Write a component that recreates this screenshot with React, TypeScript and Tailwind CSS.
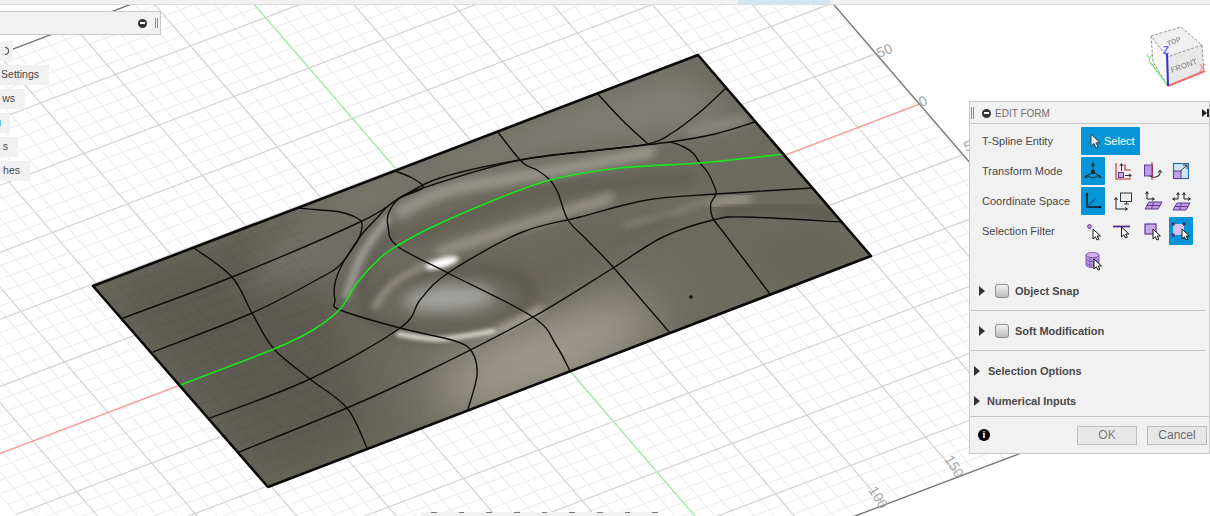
import type { ReactNode } from 'react'

type Pt = [number, number]

// viewport projection, measured off the grid labels
const proj = (x: number, y: number): Pt => [483 + 1.5 * x - 0.87 * y, 270 - 0.57 * x - 1.01 * y]

const X_MIN = -340
const X_MAX = 291
const Y_MIN = -289
const Y_MAX = 298

const spline = (pts: Pt[]) => {
    let d = `M${pts[0][0]} ${pts[0][1]}`
    for (let i = 0; i < pts.length - 1; i++) {
        const p0 = pts[i - 1] ?? pts[i]
        const p1 = pts[i]
        const p2 = pts[i + 1]
        const p3 = pts[i + 2] ?? p2
        const c1 = [p1[0] + (p2[0] - p0[0]) / 6, p1[1] + (p2[1] - p0[1]) / 6]
        const c2 = [p2[0] - (p3[0] - p1[0]) / 6, p2[1] - (p3[1] - p1[1]) / 6]
        d += ` C${c1[0]} ${c1[1]} ${c2[0]} ${c2[1]} ${p2[0]} ${p2[1]}`
    }
    return d
}

const range = (from: number, to: number, step: number) => {
    const out: number[] = []
    for (let v = from; v <= to; v += step) out.push(v)
    return out
}

const PLATE = '93,286 698,55 871,256 268,487'

const meshLines: Pt[][] = [
    [[123, 318], [232, 277], [360, 222], [400, 198], [440, 178], [520, 160], [600, 150], [648, 144], [672, 133], [700, 112], [726, 88]],
    [[153, 352], [252, 313], [320, 278], [340, 265], [353, 247], [363, 233], [377, 218], [392, 203], [420, 189], [520, 160], [600, 150], [670, 142], [715, 134], [755, 122]],
    [[210, 418], [310, 379], [400, 328], [420, 300], [448, 273], [520, 233], [580, 217], [647, 200], [716, 194], [813, 188]],
    [[239, 452], [347, 408], [430, 370], [533, 317], [613, 268], [663, 237], [713, 220], [747, 217], [842, 222]],
    [[194, 248], [232, 277], [252, 313], [274, 349], [310, 379], [347, 408], [367, 448]],
    [[297, 208], [320, 210], [340, 212], [357, 218], [362, 225], [358, 240], [343, 263], [335, 283], [335, 300], [340, 310], [400, 328], [455, 341], [472, 352], [477, 375], [468, 409]],
    [[395, 171], [412, 178], [423, 188], [400, 198], [389, 212], [388, 226], [397, 246], [448, 273], [533, 317], [556, 345], [570, 371]],
    [[497, 131], [522, 162], [537, 170], [550, 180], [558, 193], [568, 220], [587, 240], [613, 267], [670, 333]],
    [[597, 93], [622, 120], [648, 144]],
    [[670, 142], [682, 146], [693, 153], [700, 163], [708, 173], [715, 188], [716, 194], [711, 203], [711, 212], [714, 220], [727, 237], [770, 294]],
]

const greenLine: Pt[] = [
    [180, 385], [274, 349], [313, 330], [340, 309], [357, 283], [380, 258], [397, 246], [430, 228], [487, 203], [550, 180], [620, 168], [700, 163], [785, 154],
]

// soft strokes for the surface shading: colour, width, blur id, points, opacity
const shadeStrokes: [string, number, string, Pt[], number][] = [
    ['#a9a89f', 11, 'blur5', [[400, 212], [450, 190], [550, 172], [650, 152]], 0.8],
    ['#5f5b50', 13, 'blur5', [[405, 240], [480, 212], [560, 190], [690, 178]], 0.7],
    ['#a6a196', 9, 'blur5', [[440, 252], [520, 226], [610, 198]], 0.9],
    ['#b9bcb9', 5, 'blur3', [[346, 296], [362, 255], [388, 218]], 0.9],
    ['#57534a', 6, 'blur3', [[360, 292], [378, 255], [396, 232]], 0.6],
    ['#a8a39a', 6, 'blur3', [[375, 306], [395, 282], [432, 262]], 0.8],
    ['#f6f4ef', 4, 'blur2', [[398, 334], [440, 339], [494, 331]], 1],
    ['#b5b0a5', 8, 'blur3', [[500, 330], [540, 310]], 0.7],
    ['#b2ad9f', 9, 'blur5', [[712, 204], [748, 198]], 0.75],
    ['#a8a89f', 4, 'blur3', [[625, 226], [670, 214], [705, 201]], 0.5],
    ['#a7a7a0', 7, 'blur5', [[690, 133], [745, 119]], 0.6],
    ['#5c584e', 12, 'blur5', [[725, 212], [780, 208], [835, 215]], 0.8],
    ['#5f5c52', 8, 'blur5', [[620, 240], [670, 218]], 0.5],
]

const gridLines = (major: boolean) => (
    <>
        {range(-340, X_MAX, 10)
            .filter((x) => (x % 50 === 0) === major)
            .map((x) => {
                const a = proj(x, Y_MIN)
                const b = proj(x, Y_MAX)
                return <line key={`x${x}`} x1={a[0]} y1={a[1]} x2={b[0]} y2={b[1]} />
            })}
        {range(-280, Y_MAX, 10)
            .filter((y) => (y % 50 === 0) === major)
            .map((y) => {
                const a = proj(X_MIN, y)
                const b = proj(X_MAX, y)
                return <line key={`y${y}`} x1={a[0]} y1={a[1]} x2={b[0]} y2={b[1]} />
            })}
    </>
)

function Grid() {
    const redA = proj(X_MIN, 0)
    const redB = proj(X_MAX, 0)
    const grnA = proj(0, Y_MIN)
    const grnB = proj(0, Y_MAX)
    const corner1 = proj(X_MAX, Y_MAX)
    const corner2 = proj(X_MAX, Y_MIN)
    const corner3 = proj(X_MIN, Y_MIN)
    const corner4 = proj(X_MIN, Y_MAX)
    return (
        <>
            <g stroke="#efefef" strokeWidth="1.2">{gridLines(false)}</g>
            <g stroke="#d2d2d2" strokeWidth="1.2">{gridLines(true)}</g>
            <line x1={redA[0]} y1={redA[1]} x2={redB[0]} y2={redB[1]} stroke="#ff9d9d" strokeWidth="1.3" />
            <line x1={grnA[0]} y1={grnA[1]} x2={grnB[0]} y2={grnB[1]} stroke="#a8eda8" strokeWidth="1.3" />
            <polyline
                points={`${corner4[0]},${corner4[1]} ${corner1[0]},${corner1[1]} ${corner2[0]},${corner2[1]} ${corner3[0]},${corner3[1]}`}
                fill="none"
                stroke="#777"
                strokeWidth="1.4"
            />
            <g fontFamily="'Liberation Sans', sans-serif" fontSize="14" fill="#a6a6a6">
                <text transform="translate(879 58) rotate(-22)">50</text>
                <text transform="translate(921 107) rotate(-22)">0</text>
                <text transform="translate(966 152) rotate(-22)">50</text>
                <text transform="translate(868 490) rotate(58)">100</text>
                <text transform="translate(944 459) rotate(58)">150</text>
            </g>
        </>
    )
}

function Surface() {
    return (
        <>
            <defs>
                <clipPath id="plate">
                    <polygon points={PLATE} />
                </clipPath>
                <clipPath id="plateLeft">
                    <polygon points="93,286 300,210 350,420 268,487" />
                </clipPath>
                <filter id="blur2" x="-50%" y="-50%" width="200%" height="200%"><feGaussianBlur stdDeviation="2" /></filter>
                <filter id="blur3" x="-50%" y="-50%" width="200%" height="200%"><feGaussianBlur stdDeviation="3" /></filter>
                <filter id="blur5" x="-50%" y="-50%" width="200%" height="200%"><feGaussianBlur stdDeviation="5" /></filter>
                <filter id="blur7" x="-50%" y="-50%" width="200%" height="200%"><feGaussianBlur stdDeviation="7" /></filter>
                <filter id="blur15" x="-50%" y="-50%" width="200%" height="200%"><feGaussianBlur stdDeviation="15" /></filter>
                <filter id="blur25" x="-50%" y="-50%" width="200%" height="200%"><feGaussianBlur stdDeviation="25" /></filter>
            </defs>
            <polygon points={PLATE} fill="#6d6a60" />
            <g clipPath="url(#plate)">
                <polygon points="93,286 268,487 380,440 340,300 280,220" fill="#5d5a51" filter="url(#blur25)" />
                <ellipse cx="545" cy="355" rx="120" ry="36" transform="rotate(-22 545 355)" fill="#a39d90" filter="url(#blur25)" />
                <polygon points="300,212 600,95 680,70 745,125 560,150 420,182 350,215" fill="#7f7e76" filter="url(#blur15)" />
                <polygon points="280,235 350,225 335,270 240,295" fill="#73726a" filter="url(#blur15)" />
                <polygon points="440,290 590,225 640,240 540,310" fill="#6a665b" filter="url(#blur15)" />
                <polygon points="750,250 830,235 860,258 790,280" fill="#65625a" filter="url(#blur15)" />
                <ellipse cx="448" cy="300" rx="84" ry="30" transform="rotate(-6 448 300)" fill="none" stroke="#56524a" strokeWidth="10" opacity="0.8" filter="url(#blur7)" />
                <ellipse cx="450" cy="298" rx="46" ry="13" transform="rotate(-4 450 298)" fill="#a3a3a0" filter="url(#blur7)" />
                {shadeStrokes.map(([color, width, blur, pts, opacity], i) => (
                    <path key={i} d={spline(pts)} fill="none" stroke={color} strokeWidth={width} strokeLinecap="round" opacity={opacity} filter={`url(#${blur})`} />
                ))}
                <ellipse cx="442" cy="263" rx="17" ry="5" transform="rotate(-16 442 263)" fill="#ffffff" filter="url(#blur2)" />
            </g>
            <g clipPath="url(#plateLeft)" stroke="#000" strokeWidth="1" opacity="0.05">
                {gridLines(false)}
                {gridLines(true)}
            </g>
            <g fill="none" stroke="#0d0d0d" strokeWidth="1.4">
                {meshLines.map((pts, i) => (
                    <path key={i} d={spline(pts)} />
                ))}
            </g>
            <path d={spline(greenLine)} fill="none" stroke="#19e619" strokeWidth="1.6" />
            <circle cx="691" cy="297" r="1.8" fill="#111" />
            <polygon points={PLATE} fill="none" stroke="#0a0a0a" strokeWidth="2.6" strokeLinejoin="round" />
        </>
    )
}

function NavCube() {
    return (
        <svg className="absolute left-[1130px] top-[15px] h-[85px] w-[80px]" viewBox="1130 15 80 85">
            <g filter="url(#cubeblur)">
                <polygon points="1151,36 1181,27 1202,45 1204,71 1168,86 1153,62" fill="#f7f7f7" />
                <polygon points="1151,36 1181,27 1202,45 1167,57" fill="#f0f0f0" />
                <polygon points="1167,57 1202,45 1204,71 1168,86" fill="#e8e8e8" />
                <g fill="none" stroke="#8a8a8a" strokeWidth="0.9" strokeDasharray="3 1.5">
                    <polygon points="1151,36 1181,27 1202,45 1167,57" />
                    <path d="M1202,45 L1204,71 M1151,36 L1153,62 L1168,86" />
                </g>
                <g fontFamily="'Liberation Sans', sans-serif" fontWeight="700" fill="#9a9a9a">
                    <text fontSize="7" transform="translate(1168 46) rotate(-20)">TOP</text>
                    <text fontSize="8" transform="translate(1172 73) rotate(-20)">FRONT</text>
                </g>
                <line x1="1168" y1="86" x2="1205" y2="71" stroke="#e8706a" strokeWidth="2" />
                <line x1="1168" y1="86" x2="1150" y2="62" stroke="#8fe08f" strokeWidth="1.6" />
                <line x1="1168" y1="86" x2="1167" y2="53" stroke="#3030d0" strokeWidth="2" />
                <g fontFamily="'Liberation Sans', sans-serif" fontSize="10">
                    <text x="1163" y="54" fill="#6a6ae8" fontWeight="700">Z</text>
                    <text x="1199" y="72" fill="#f08078">X</text>
                    <text x="1146" y="62" fill="#7fdc7f">Y</text>
                </g>
            </g>
            <defs>
                <filter id="cubeblur"><feGaussianBlur stdDeviation="0.35" /></filter>
            </defs>
        </svg>
    )
}

function Cursor({ x, y }: { x: number; y: number }) {
    return (
        <path
            transform={`translate(${x} ${y})`}
            d="M0 0 L0 10 L2.4 7.8 L4 11 L5.8 10.2 L4.2 7 L7.4 7 Z"
            fill="#fff"
            stroke="#000"
            strokeWidth="0.9"
            strokeLinejoin="round"
        />
    )
}

function Icon({ children }: { children: ReactNode }) {
    return (
        <svg className="h-6 w-6" viewBox="0 0 24 24">
            {children}
        </svg>
    )
}

const iconTriad = (
    <Icon>
        <g stroke="#1c2b36" strokeWidth="1" fill="none">
            <path d="M12 4 V13 M12 13 L4 18 M12 13 L20 18" />
            <path d="M6 16 A8 8 0 0 0 18 16" />
        </g>
        <circle cx="12" cy="13" r="2.2" fill="#1c2b36" />
        <path d="M12 3 L10 7 H14 Z M3 19 L7 18.6 L5.4 15.8 Z M21 19 L17 18.6 L18.6 15.8 Z" fill="#1c2b36" />
    </Icon>
)

const iconTranslate = (
    <Icon>
        <path d="M5 4 V20 H20 M14 5 V11 H20" fill="none" stroke="#c8262c" strokeWidth="1.1" />
        <path d="M10.5 12 V5 M8.8 7 L10.5 4.6 L12.2 7 M14 16.5 H20 M18 14.8 L20.4 16.5 L18 18.2" fill="none" stroke="#333" strokeWidth="1" />
        <rect x="7.5" y="13.5" width="5" height="5" fill="#c9a9e8" stroke="#5f3a96" strokeWidth="1" />
    </Icon>
)

const iconRotate = (
    <Icon>
        <rect x="3.5" y="6" width="8" height="11" fill="#bd9ae4" stroke="#5f3a96" strokeWidth="1" />
        <path d="M11 3 V21" stroke="#c8262c" strokeWidth="1" />
        <path d="M9 17 C14 20 20 17 19 12" fill="none" stroke="#333" strokeWidth="1.1" />
        <path d="M16.8 13.8 L19 11 L21 13.8" fill="none" stroke="#333" strokeWidth="1" />
    </Icon>
)

const iconScale = (
    <Icon>
        <rect x="4.5" y="4.5" width="15" height="15" fill="#cfe4f2" stroke="#1f6fb0" strokeWidth="1.1" />
        <rect x="4.5" y="12" width="7.5" height="7.5" fill="#c39fe8" stroke="#5f3a96" strokeWidth="1" />
        <path d="M11 12.5 L18 6 M14 6 H18 V10" fill="none" stroke="#333" strokeWidth="1" />
    </Icon>
)

const iconWorld = (
    <Icon>
        <path d="M6 4 V18 H20" fill="none" stroke="#111" strokeWidth="1.3" />
        <path d="M6 18 L15 9" stroke="#0b5f90" strokeWidth="1.2" />
        <path d="M4.5 6.5 L6 3.5 L7.5 6.5 Z M18 16.5 L21 18 L18 19.5 Z" fill="#111" />
    </Icon>
)

const iconScreen = (
    <Icon>
        <path d="M5 9 V20 H16 M3.5 11 L5 8.5 L6.5 11 M14 18.5 L16.5 20 L14 21.5" fill="none" stroke="#222" strokeWidth="1" />
        <rect x="9.5" y="4" width="11" height="8.5" fill="#eee" stroke="#333" strokeWidth="1" />
        <path d="M13 15 H18 M15.5 12.5 V15" stroke="#333" strokeWidth="1" />
    </Icon>
)

const iconPlane = (
    <Icon>
        <path d="M8 13 L4 20 H17 L21 13 Z M6 16.5 H19 M12.5 13 L10.5 20" fill="#bd9ae4" stroke="#5f3a96" strokeWidth="1" />
        <path d="M6 3 V10 H13 M4.6 5 L6 2.6 L7.4 5 M11 8.6 L13.4 10 L11 11.4" fill="none" stroke="#222" strokeWidth="1" />
    </Icon>
)

const iconPlanes = (
    <Icon>
        <path d="M8 14 L4 21 H17 L21 14 Z M6 17.5 H19 M12.5 14 L10.5 21" fill="#bd9ae4" stroke="#5f3a96" strokeWidth="1" />
        <path d="M9 4 V10 H4 M15 4 V10 H21 M7.6 6 L9 3.6 L10.4 6 M13.6 6 L15 3.6 L16.4 6 M6 8.6 L3.6 10 L6 11.4 M19 8.6 L21.4 10 L19 11.4" fill="none" stroke="#222" strokeWidth="1" />
    </Icon>
)

const iconVertex = (
    <Icon>
        <circle cx="8.5" cy="7.5" r="1.9" fill="#bd9ae4" stroke="#5f3a96" strokeWidth="1" />
        <Cursor x={12} y={10} />
    </Icon>
)

const iconEdge = (
    <Icon>
        <path d="M2 7.5 H19" stroke="#5a2d8c" strokeWidth="1.8" />
        <Cursor x={10.5} y={8} />
    </Icon>
)

const iconFace = (
    <Icon>
        <rect x="4" y="5" width="11" height="10" fill="#c7a8ea" stroke="#5f3a96" strokeWidth="1.2" />
        <Cursor x={12} y={10} />
    </Icon>
)

const iconBody = (
    <Icon>
        <rect x="4" y="5" width="11" height="11" fill="#d7c2ef" />
        <path d="M2.6 3.6 h3 v3 h-3 Z M13.6 3.6 h3 v3 h-3 Z M2.6 14.6 h3 v3 h-3 Z M13.6 14.6 h3 v3 h-3 Z" fill="#4a2a78" />
        <Cursor x={13} y={10} />
    </Icon>
)

const iconSolid = (
    <Icon>
        <path d="M5 6 V16 A6.5 2.6 0 0 0 18 16 V6 Z" fill="#b48fdf" stroke="#6a49a0" strokeWidth="0.8" />
        <ellipse cx="11.5" cy="6" rx="6.5" ry="2.6" fill="#cdb2ee" stroke="#6a49a0" strokeWidth="0.8" />
        <path d="M5 10 A6.5 2.6 0 0 0 18 10 M5 13.5 A6.5 2.6 0 0 0 18 13.5 M9 8 V18 M13 8 V18" fill="none" stroke="#6a49a0" strokeWidth="0.6" />
        <Cursor x={13} y={10} />
    </Icon>
)

function IconCell({ active, tight, children }: { active?: boolean; tight?: boolean; children: ReactNode }) {
    return (
        <div className={`flex h-7 w-6 items-center justify-center ${active ? 'rounded-[1px] bg-[#0696d7]' : ''} ${tight ? '-ml-0.5' : ''}`}>
            {children}
        </div>
    )
}

function FormRow({ label, short, children }: { label?: string; short?: boolean; children: ReactNode }) {
    return (
        <div className={`flex pl-3 ${short ? 'h-[25px] items-start pt-px' : 'h-[30px] items-center'}`}>
            <div className="w-[99px] text-[#46484a]">{label}</div>
            <div className="flex gap-1.5">{children}</div>
        </div>
    )
}

function Caret() {
    return <div className="h-0 w-0 shrink-0 border-y-[5px] border-l-[6px] border-y-transparent border-l-[#333]" />
}

function SnapRow({ label }: { label: string }) {
    return (
        <div className="ml-px mr-1 flex h-10 items-center border-b border-[#c6c6c6] pl-[8px] pt-px font-bold text-[#48484c]">
            <Caret />
            <div className="ml-[10px] mr-[6px] h-[14px] w-[14px] rounded-[3px] border border-[#8d8d8d] bg-gradient-to-b from-[#f2f2f2] to-[#bdbdbd]" />
            <span>{label}</span>
        </div>
    )
}

function EditForm() {
    return (
        <div className="absolute left-[969px] top-[101px] flex h-[353px] w-[241px] flex-col border border-[#c9c9c9] bg-[#f1f1f1] text-[11px]">
            <div className="flex h-[22px] shrink-0 items-center border-b border-[#c9c9c9] pl-px pt-px text-[#6e6e6e]">
                <div className="mr-[8px] h-3 w-[3px] border-x border-[#8c8c8c]" />
                <div className="mr-[4px] flex h-[9px] w-[9px] items-center justify-center rounded-full bg-[#333]">
                    <div className="h-[1.5px] w-[5px] bg-white" />
                </div>
                <span className="text-[10px]">EDIT FORM</span>
                <div className="ml-auto flex items-center">
                    <div className="h-0 w-0 border-y-[4px] border-l-[5px] border-y-transparent border-l-[#222]" />
                    <div className="h-2 w-[2px] bg-[#222]" />
                </div>
            </div>
            <div className="flex flex-col pt-[2px]">
                <FormRow label="T-Spline Entity">
                    <div className="flex h-7 w-[59px] items-center gap-[3px] rounded-[1px] bg-[#0696d7] pl-2 text-white">
                        <svg className="h-4 w-3" viewBox="0 0 12 16">
                            <path d="M2 1 L2 13 L5 10.5 L7 15 L9 14 L7 9.8 L11 9.8 Z" fill="#e9e9e9" stroke="#333" strokeWidth="0.9" strokeLinejoin="round" />
                        </svg>
                        <span>Select</span>
                    </div>
                </FormRow>
                <FormRow label="Transform Mode">
                    <IconCell active>{iconTriad}</IconCell>
                    <IconCell>{iconTranslate}</IconCell>
                    <IconCell>{iconRotate}</IconCell>
                    <IconCell tight>{iconScale}</IconCell>
                </FormRow>
                <FormRow label="Coordinate Space">
                    <IconCell active>{iconWorld}</IconCell>
                    <IconCell>{iconScreen}</IconCell>
                    <IconCell>{iconPlane}</IconCell>
                    <IconCell tight>{iconPlanes}</IconCell>
                </FormRow>
                <FormRow label="Selection Filter">
                    <IconCell>{iconVertex}</IconCell>
                    <IconCell>{iconEdge}</IconCell>
                    <IconCell>{iconFace}</IconCell>
                    <IconCell active tight>{iconBody}</IconCell>
                </FormRow>
                <FormRow short>
                    <IconCell>{iconSolid}</IconCell>
                </FormRow>
            </div>
            <SnapRow label="Object Snap" />
            <SnapRow label="Soft Modification" />
            <div className="mt-[5px] flex h-[30px] items-center gap-[8px] pl-[4px] font-bold text-[#48484c]">
                <Caret />
                <span>Selection Options</span>
            </div>
            <div className="flex h-[30px] items-center gap-[7px] pl-[4px] font-bold text-[#48484c]">
                <Caret />
                <span>Numerical Inputs</span>
            </div>
            <div className="flex flex-1 items-center border-t border-[#c6c6c6] pl-[8px] pr-[2px]">
                <div className="flex h-3 w-3 items-center justify-center rounded-full bg-black font-['Liberation_Serif',serif] text-[10px] font-bold leading-none text-white">
                    i
                </div>
                <div className="ml-auto flex gap-2.5 text-[#6c6c6c]">
                    <div className="flex h-[19px] w-[60px] items-center justify-center border border-[#bdbdbd] bg-[#e7e7e7] text-[12px] text-[#7d7d7d]">OK</div>
                    <div className="flex h-[19px] w-[60px] items-center justify-center border border-[#bdbdbd] bg-[#e7e7e7] text-[12px]">Cancel</div>
                </div>
            </div>
        </div>
    )
}

function Browser() {
    const rows = [
        { label: 'Settings', w: 'w-[49px]' },
        { label: 'ws', w: 'w-[25px]' },
        { label: '', w: 'w-[10px]', blue: true },
        { label: 's', w: 'w-[18px]' },
        { label: 'hes', w: 'w-[30px]' },
    ]
    return (
        <div className="absolute left-0 top-[11px] flex flex-col items-start text-[10.5px] text-[#46484a]">
            <div className="flex h-6 w-[161px] items-center justify-end border border-l-0 border-[#c9c9c9] bg-[#f1f1f1] pr-[2px]">
                <div className="mr-[8px] flex h-[9px] w-[9px] items-center justify-center rounded-full bg-[#333]">
                    <div className="h-[1.5px] w-[5px] bg-white" />
                </div>
                <div className="h-[10px] w-[3px] border-x border-[#8c8c8c]" />
            </div>
            <div className="mt-1.5 flex h-5 w-[13px] items-center justify-end bg-[#f1f1f1] pr-[4px]">
                <div className="h-2 w-1 rounded-r-full border border-l-0 border-[#444]" />
            </div>
            {rows.map((row) => (
                <div key={row.w} className={`mt-1 flex h-5 items-center justify-end overflow-hidden whitespace-nowrap bg-[#f1f1f1] ${row.w} ${row.blue ? 'pr-[9px]' : 'pr-[10px]'}`}>
                    {row.blue ? <div className="h-[6px] w-px shrink-0 bg-[#5cc6ee]" /> : row.label}
                </div>
            ))}
        </div>
    )
}

export default function App() {
    return (
        <div className="relative h-[516px] w-[1210px] overflow-hidden bg-white font-['Liberation_Sans',Arial,sans-serif]">
            <svg className="absolute left-0 top-0" width="1210" height="516" viewBox="0 0 1210 516">
                <Grid />
                <Surface />
            </svg>
            <div className="relative flex h-[5px] border-b border-[#dcdcdc] bg-[#f2f2f2]">
                <div className="ml-[738px] h-1 w-[92px] bg-[#cde7f5]" />
            </div>
            <Browser />
            <NavCube />
            <EditForm />
            <div className="absolute left-[421px] top-[512px] flex h-1 w-[237px] items-start gap-[22px] bg-[#f1f1f1] pl-[10px]">
                {[0, 1, 2, 3, 4, 5, 6, 7, 8].map((i) => (
                    <div key={i} className="h-px w-2 bg-[#777]" />
                ))}
            </div>
        </div>
    )
}
